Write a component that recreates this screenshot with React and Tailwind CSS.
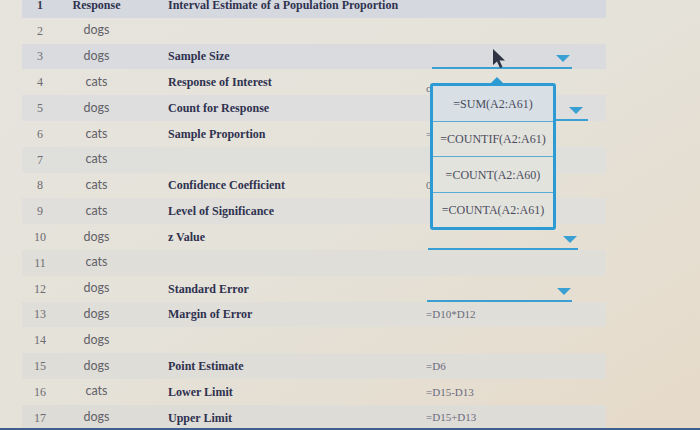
import React from "react";

const rows = [
  { n: "1", r: "Response", l: "Interval Estimate of a Population Proportion", head: true, band: "bg-[#d5d8de]" },
  { n: "2", r: "dogs", l: "" },
  { n: "3", r: "dogs", l: "Sample Size", band: "bg-[#d9dbde]", dd: { ml: "ml-[7px]", w: "w-[140px]", pr: "pr-[2px]" } },
  { n: "4", r: "cats", l: "Response of Interest", f: "cats", fp: "pt-[12px]" },
  { n: "5", r: "dogs", l: "Count for Response", band: "bg-[#dddedd]", dd: { ml: "ml-[15px]", w: "w-[148px]", pr: "pr-[5px]" } },
  { n: "6", r: "cats", l: "Sample Proportion", f: "=D5/D3" },
  { n: "7", r: "cats", l: "", band: "bg-[#dfdfdc]" },
  { n: "8", r: "cats", l: "Confidence Coefficient", f: "0.95" },
  { n: "9", r: "cats", l: "Level of Significance", band: "bg-[#e0dfdb]" },
  { n: "10", r: "dogs", l: "z Value", dd: { ml: "ml-[3px]", w: "w-[150px]", pr: "pr-[1px]" } },
  { n: "11", r: "cats", l: "", band: "bg-[#e0ded9]" },
  { n: "12", r: "dogs", l: "Standard Error", dd: { ml: "ml-[2px]", w: "w-[145px]", pr: "pr-[1px]" } },
  { n: "13", r: "dogs", l: "Margin of Error", f: "=D10*D12", band: "bg-[#e0ded8]" },
  { n: "14", r: "dogs", l: "" },
  { n: "15", r: "dogs", l: "Point Estimate", f: "=D6", band: "bg-[#dfddd7]" },
  { n: "16", r: "cats", l: "Lower Limit", f: "=D15-D13" },
  { n: "17", r: "dogs", l: "Upper Limit", f: "=D15+D13", band: "bg-[#dedcd6]" },
];

const serif = "font-['Liberation_Serif','Times_New_Roman',serif]";

function Tri() {
  return (
    <svg width="14" height="7" viewBox="0 0 14 7" className="block">
      <path d="M0 0 L14 0 L7 7 Z" fill="#3a9fd2" />
    </svg>
  );
}

function Dropdown({ ml, w, pr }) {
  return (
    <div className={`${ml} ${w} h-full border-b-2 border-[#3a9fd2] flex items-end justify-end ${pr} pb-[5px]`}>
      <Tri />
    </div>
  );
}

export default function App() {
  return (
    <div className="relative w-[700px] h-[430px] overflow-hidden bg-linear-to-br from-[#e6e4dd] via-[#e5e2d9] to-[#e6dac9]">
      <div className="flex flex-col mt-[-8px]">
        {rows.map((row) => (
          <div key={row.n} className="flex h-[25.8px]">
            <div className="w-[22px]" />
            <div className={`flex w-[584px] h-full ${row.band || ""}`}>
              <div className={`w-[36px] flex items-center justify-center text-[12px] ${serif} ${row.head ? "font-bold text-[#3a3c52]" : "text-[#6c6c72]"}`}>
                {row.n}
              </div>
              <div
                className={`w-[77px] flex items-center justify-center ${
                  row.head
                    ? `${serif} text-[12px] font-bold text-[#2f3250]`
                    : "font-['Lato','Open_Sans',sans-serif] text-[12.5px] text-[#616168]"
                }`}
              >
                {row.r}
              </div>
              <div className={`w-[290px] pl-[33px] flex items-center text-[12px] font-bold text-[#2f3250] whitespace-nowrap ${serif}`}>
                {row.l}
              </div>
              <div className={`flex-1 flex items-center text-[11px] text-[#6b6b80] ${serif}`}>
                {row.dd ? <Dropdown {...row.dd} /> : <span className={`pl-[1px] ${row.fp || ""}`}>{row.f || ""}</span>}
              </div>
            </div>
          </div>
        ))}
      </div>

      {/* dropdown list popup */}
      <div className={`absolute left-[430px] top-[83px] w-[126px] h-[147px] border-[3px] border-[#2d9bd3] rounded-[3px] bg-[#e3e3de] flex flex-col text-[12px] text-[#4a4c5c] ${serif}`}>
        <svg width="14" height="7" viewBox="0 0 14 7" className="absolute left-[57px] top-[-9px]">
          <path d="M0 7 L7 0 L14 7 Z" fill="#2d9bd3" />
        </svg>
        <div className="h-[36px] bg-[#d8dfe5] border-b border-[#5aaad6] flex items-center justify-center">=SUM(A2:A61)</div>
        <div className="h-[35px] border-b border-[#5aaad6] flex items-center justify-center">=COUNTIF(A2:A61)</div>
        <div className="h-[36px] border-b border-[#5aaad6] flex items-center justify-center">=COUNT(A2:A60)</div>
        <div className="flex-1 flex items-center justify-center">=COUNTA(A2:A61)</div>
      </div>

      {/* mouse cursor */}
      <svg width="14" height="21" viewBox="0 0 14 21" className="absolute left-[492px] top-[48px]">
        <path d="M1 1 L1 17 L5 13.5 L8 20 L10.5 19 L7.5 12.5 L13 12.5 Z" fill="#2e3242" />
      </svg>

      <div className="absolute left-0 bottom-0 w-full h-[2px] bg-[#3d5e8e]" />
    </div>
  );
}
